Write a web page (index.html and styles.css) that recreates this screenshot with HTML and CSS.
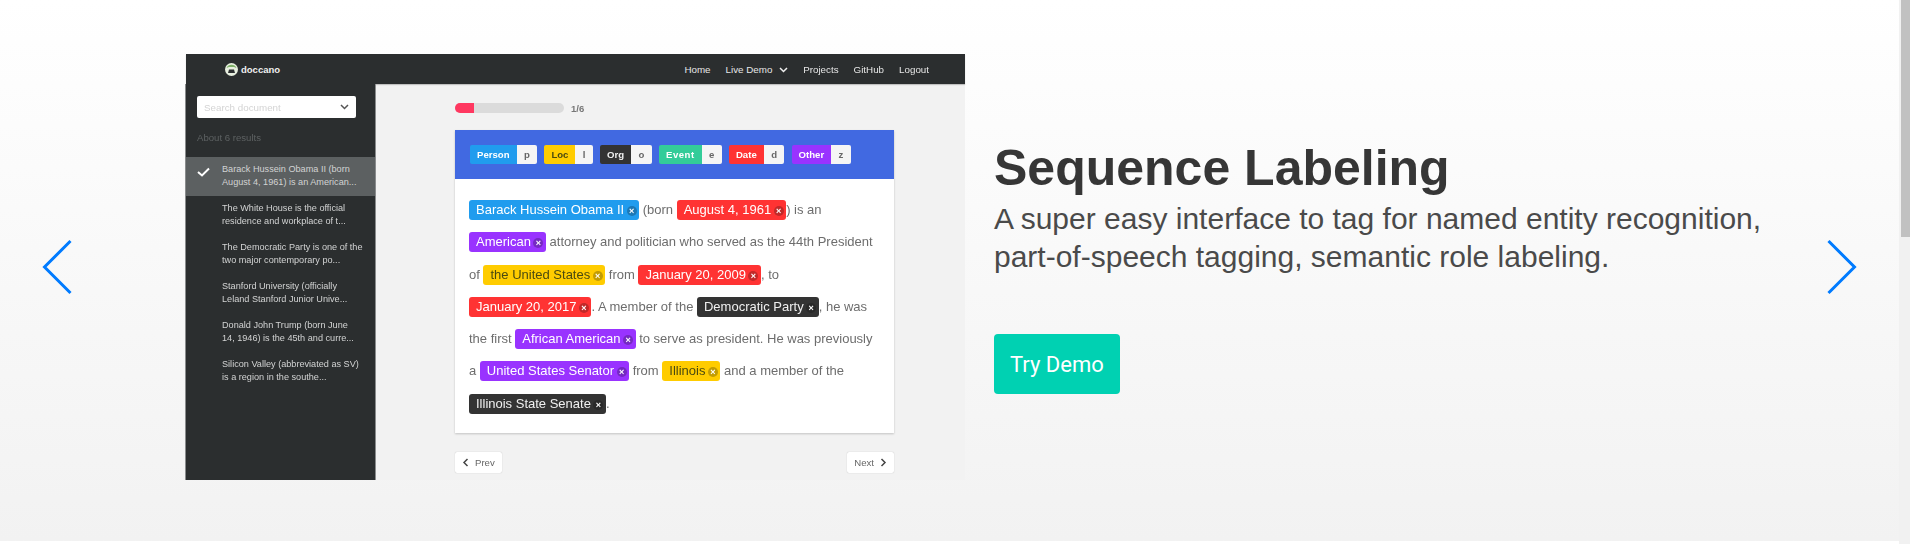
FILE: index.html
```html
<!DOCTYPE html>
<html lang="en">
<head>
    <meta charset="UTF-8">
    <meta name="viewport" content="width=device-width, initial-scale=1.0">
    <title>doccano</title>
    <link rel="stylesheet" href="styles.css">
</head>
<body>
    <div class="page">
        <section class="carousel">
            <button type="button" class="arrow arrow-left" aria-label="Previous">
                <svg width="32" height="58" viewBox="0 0 32 58"><path d="M29.5 3 L3.5 29 L29.5 55"/></svg>
            </button>
            <div class="slide">
                <div class="shot">
                    <nav class="app-nav">
                        <div class="brand">
                            <svg class="brand-logo" width="13" height="13" viewBox="0 0 13 13">
                                <circle cx="6.5" cy="6.5" r="6.5" fill="#e8efe0"/>
                                <path d="M1.5 5 A5.5 5.5 0 0 1 11.5 5 L9 4 L4 4 Z" fill="#7fb069"/>
                                <path d="M3 10 L4 6.5 L9 6.5 L10 10 Z" fill="#2b2e2f"/>
                            </svg>
                            <span>doccano</span>
                        </div>
                        <ul class="nav-links">
                            <li>Home</li>
                            <li class="nav-drop">Live Demo
                                <svg width="9" height="6" viewBox="0 0 9 6"><path d="M1 1 L4.5 4.5 L8 1"/></svg>
                            </li>
                            <li>Projects</li>
                            <li>GitHub</li>
                            <li>Logout</li>
                        </ul>
                    </nav>
                    <div class="app-body">
                        <aside class="sidebar">
                            <div class="search">
                                <span>Search document</span>
                                <svg width="9" height="6" viewBox="0 0 9 6"><path d="M1 1 L4.5 4.5 L8 1"/></svg>
                            </div>
                            <p class="results">About 6 results</p>
                            <ul class="docs">
                                <li class="doc doc-active">
                                    <svg class="check" width="13" height="10" viewBox="0 0 13 10"><path d="M1 5 L5 8.5 L12 1.5"/></svg>
                                    Barack Hussein Obama II (born<br>August 4, 1961) is an American...
                                </li>
                                <li class="doc">The White House is the official<br>residence and workplace of t...</li>
                                <li class="doc">The Democratic Party is one of the<br>two major contemporary po...</li>
                                <li class="doc">Stanford University (officially<br>Leland Stanford Junior Unive...</li>
                                <li class="doc">Donald John Trump (born June<br>14, 1946) is the 45th and curre...</li>
                                <li class="doc">Silicon Valley (abbreviated as SV)<br>is a region in the southe...</li>
                            </ul>
                        </aside>
                        <main class="annotator">
                            <div class="progress-row">
                                <div class="progress"><div class="progress-fill"></div></div>
                                <span>1/6</span>
                            </div>
                            <div class="card">
                                <div class="label-bar">
                                    <span class="shortcut"><b class="c-blue">Person</b><i>p</i></span>
                                    <span class="shortcut"><b class="c-yellow">Loc</b><i>l</i></span>
                                    <span class="shortcut"><b class="c-dark">Org</b><i>o</i></span>
                                    <span class="shortcut"><b class="c-green">Event</b><i>e</i></span>
                                    <span class="shortcut"><b class="c-red">Date</b><i>d</i></span>
                                    <span class="shortcut"><b class="c-purple">Other</b><i>z</i></span>
                                </div>
                                <p class="doc-text">
                                    <span class="tag c-blue">Barack Hussein Obama II<i>×</i></span> (born <span class="tag c-red">August 4, 1961<i>×</i></span>) is an<br>
                                    <span class="tag c-purple">American<i>×</i></span> attorney and politician who served as the 44th President<br>
                                    of <span class="tag c-yellow">the United States<i>×</i></span> from <span class="tag c-red">January 20, 2009<i>×</i></span>, to<br>
                                    <span class="tag c-red">January 20, 2017<i>×</i></span>. A member of the <span class="tag c-dark">Democratic Party<i>×</i></span>, he was<br>
                                    the first <span class="tag c-purple">African American<i>×</i></span> to serve as president. He was previously<br>
                                    a <span class="tag c-purple">United States Senator<i>×</i></span> from <span class="tag c-yellow">Illinois<i>×</i></span> and a member of the<br>
                                    <span class="tag c-dark">Illinois State Senate<i>×</i></span>.
                                </p>
                            </div>
                            <div class="pager">
                                <span class="page-btn"><svg width="7" height="9" viewBox="0 0 7 9"><path d="M5.5 1 L2 4.5 L5.5 8"/></svg>Prev</span>
                                <span class="page-btn">Next<svg width="7" height="9" viewBox="0 0 7 9"><path d="M1.5 1 L5 4.5 L1.5 8"/></svg></span>
                            </div>
                        </main>
                    </div>
                </div>
                <div class="slide-copy">
                    <h2>Sequence Labeling</h2>
                    <p>A super easy interface to tag for named entity recognition, part-of-speech tagging, semantic role labeling.</p>
                    <a class="try-btn" href="#">Try Demo</a>
                </div>
            </div>
            <button type="button" class="arrow arrow-right" aria-label="Next">
                <svg width="32" height="58" viewBox="0 0 32 58"><path d="M2.5 3 L28.5 29 L2.5 55"/></svg>
            </button>
        </section>
    </div>
    <div class="scrollbar"><div class="scroll-thumb"></div></div>
</body>
</html>
```

FILE: styles.css
```css
html, body {
    height: 100%;
}
body {
    display: flex;
    margin: 0;
    overflow: hidden;
    font-family: "Liberation Sans", Arial, sans-serif;
    background-color: #ffffff;
}
.page {
    flex: 1;
    min-width: 0;
}
.carousel {
    display: flex;
    align-items: center;
    height: 541px;
    box-sizing: border-box;
    padding-bottom: 7px;
    background: linear-gradient(#ffffff, #f2f2f2);
}
.arrow {
    display: flex;
    flex: none;
    padding: 0;
    border: none;
    background: none;
}
.arrow svg {
    fill: none;
    stroke: #007bff;
    stroke-width: 3;
}
.arrow-left {
    margin: 0 113px 0 41px;
}
.arrow-right {
    margin: 0 41px 0 auto;
}
.slide {
    display: flex;
    align-items: center;
}

/* screenshot of the app */
.shot {
    display: flex;
    flex-direction: column;
    width: 779px;
    height: 426px;
    flex: none;
    background-color: #f2f2f2;
    color: #4a4a4a;
    filter: blur(0.35px);
}
.app-nav {
    display: flex;
    justify-content: space-between;
    align-items: center;
    flex: none;
    height: 30px;
    padding: 0 36px 0 39px;
    background-color: #2b2e2f;
    box-shadow: 0 1px 1px rgba(0, 0, 0, 0.2);
    font-size: 9.8px;
    color: #e6e6e6;
}
.brand {
    display: flex;
    align-items: center;
    gap: 3px;
    font-weight: bold;
    font-size: 9.5px;
    color: #f0f0f0;
}
.nav-links {
    display: flex;
    gap: 15px;
    margin: 0;
    padding: 0;
    list-style: none;
}
.nav-drop svg {
    margin-left: 4px;
    fill: none;
    stroke: #f0f0f0;
    stroke-width: 1.5;
}
.app-body {
    display: flex;
    flex: 1;
    min-height: 0;
}
.sidebar {
    flex: none;
    width: 190px;
    box-sizing: border-box;
    padding-top: 12px;
    border-right: 1px solid #8a8c8d;
    background-color: #2b2e2f;
    box-shadow: -1px 0 0 #8a8c8d;
}
.search {
    display: flex;
    justify-content: space-between;
    align-items: center;
    width: 159px;
    height: 22px;
    box-sizing: border-box;
    margin-left: 11px;
    padding: 0 7px;
    border-radius: 2px;
    background-color: #ffffff;
    font-size: 9.8px;
    color: #d4d4d4;
}
.search svg {
    fill: none;
    stroke: #555;
    stroke-width: 1.5;
}
.results {
    margin: 13px 0 13px 11px;
    font-size: 9.6px;
    line-height: 13px;
    color: #5d6162;
}
.docs {
    margin: 0;
    padding: 0;
    list-style: none;
}
.doc {
    position: relative;
    height: 39px;
    box-sizing: border-box;
    padding: 6px 0 0 36px;
    font-size: 9.15px;
    line-height: 13px;
    white-space: nowrap;
    color: #d2d3d3;
}
.doc-active {
    background-color: #5c6061;
}
.check {
    position: absolute;
    left: 11px;
    top: 10px;
    fill: none;
    stroke: #ffffff;
    stroke-width: 2;
}

/* annotation area */
.annotator {
    flex: 1;
    padding: 0 71px 0 79px;
}
.progress-row {
    display: flex;
    align-items: center;
    gap: 7px;
    height: 10px;
    margin: 19px 0 17px;
    font-size: 9.5px;
    font-weight: bold;
    color: #777;
}
.progress {
    width: 109px;
    height: 10px;
    border-radius: 5px;
    background-color: #dbdbdb;
    overflow: hidden;
}
.progress-fill {
    width: 19px;
    height: 100%;
    background-color: #ff3860;
}
.card {
    background-color: #ffffff;
    box-shadow: 0 1px 2px rgba(10, 10, 10, 0.2);
}
.label-bar {
    display: flex;
    gap: 7.2px;
    height: 49px;
    box-sizing: border-box;
    padding: 15px 15px 0;
    background-color: #4169e1;
}
.shortcut {
    display: flex;
    height: 19px;
    font-size: 9.6px;
    line-height: 19px;
}
.shortcut b {
    padding: 0 7px;
    border-radius: 2px 0 0 2px;
}
.shortcut b.c-green {
    letter-spacing: 0.5px;
}
.shortcut i {
    padding: 0 7.4px;
    border-radius: 0 2px 2px 0;
    background-color: #f5f5f5;
    font-style: normal;
    font-weight: bold;
    color: #666;
}
.doc-text {
    margin: 0;
    padding: 15px 14px 13px;
    font-size: 13px;
    line-height: 32.25px;
    white-space: nowrap;
    color: #6d6d6d;
}
.tag {
    display: inline-block;
    height: 20px;
    padding: 0 2.5px 0 7px;
    border-radius: 3px;
    line-height: 20px;
}
.tag i {
    display: inline-block;
    width: 10px;
    height: 10px;
    margin-left: 2.5px;
    border-radius: 50%;
    background-color: rgba(10, 10, 10, 0.25);
    font-size: 9px;
    font-style: normal;
    font-weight: bold;
    line-height: 10px;
    text-align: center;
    color: #fff;
}
.c-blue { background-color: #209cee; color: #fff; }
.c-yellow { background-color: #ffcc00; color: #4a4a10; }
.c-dark { background-color: #333333; color: #f0f0f0; }
.c-green { background-color: #33cc99; color: #fff; }
.c-red { background-color: #ff3333; color: #fff; }
.c-purple { background-color: #9933ff; color: #fff; }
.pager {
    display: flex;
    justify-content: space-between;
    margin-top: 19px;
}
.page-btn {
    display: flex;
    align-items: center;
    gap: 6px;
    height: 21px;
    padding: 0 7px;
    border-radius: 2px;
    background-color: #ffffff;
    box-shadow: 0 0 1px rgba(10, 10, 10, 0.3);
    font-size: 9.6px;
    color: #666;
}
.page-btn svg {
    fill: none;
    stroke: #444;
    stroke-width: 1.5;
}

/* text beside the screenshot */
.slide-copy {
    width: 780px;
    margin-left: 29px;
    padding-bottom: 3px;
}
.slide-copy h2 {
    margin: 0;
    font-size: 50px;
    line-height: 63px;
    color: #363636;
}
.slide-copy p {
    margin: 0 0 59px;
    font-size: 30px;
    line-height: 37.5px;
    color: #4a4a4a;
}
.try-btn {
    display: inline-block;
    padding: 1px 16px 0;
    border-radius: 4px;
    background-color: #00d1b2;
    font-family: Roboto, sans-serif;
    font-size: 22px;
    line-height: 59px;
    text-decoration: none;
    color: #ffffff;
}

.scrollbar {
    flex: none;
    width: 9px;
    padding-left: 2px;
    background-color: #f1f1f1;
}
.scroll-thumb {
    height: 237px;
    background-color: #c1c1c1;
}
```
